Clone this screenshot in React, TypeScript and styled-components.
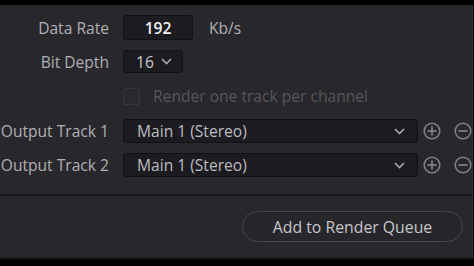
import React from "react";
import styled, { createGlobalStyle } from "styled-components";

const Global = createGlobalStyle`
  html, body { margin: 0; padding: 0; background: #000; }
  body { font-family: "Open Sans", "Noto Sans", sans-serif; }
  * { box-sizing: border-box; }
`;

const Screen = styled.div`
  width: 474px;
  height: 266px;
  background: #000;
  padding-top: 5px;
  overflow: hidden;
`;

const Panel = styled.div`
  width: 473px;
  height: 254px;
  background: #28272c;
  border-right: 1px solid #333238;
  border-bottom: 2px solid #18171b;
  display: flex;
  flex-direction: column;
`;

const Form = styled.div`
  display: grid;
  grid-template-columns: 109px 1fr;
  column-gap: 14px;
  row-gap: 10px;
  padding-top: 10px;
  padding-bottom: 17px;
  border-bottom: 2px solid #1a191d;
  align-items: center;
`;

const Label = styled.div`
  justify-self: end;
  white-space: nowrap;
  font-size: 15.6px;
  color: #b0afb4;
  line-height: 20px;
`;

const Row = styled.div<{ $h: number }>`
  display: flex;
  align-items: center;
  height: ${(p) => p.$h}px;
`;

const Field = styled.div<{ $w: number; $h: number }>`
  width: ${(p) => p.$w}px;
  height: ${(p) => p.$h}px;
  background: #1c1b1f;
  border: 1px solid #121114;
  border-radius: 3px;
  display: flex;
  align-items: center;
  color: #e6e6e8;
  font-size: 15.6px;
`;

const NumberField = styled(Field)`
  justify-content: center;
  font-weight: 600;
  color: #f0f0f2;
`;

const Unit = styled.span`
  margin-left: 16px;
  font-size: 15.6px;
  color: #b0afb4;
`;

const SmallSelect = styled(Field)`
  padding-left: 12px;
  gap: 7px;
  color: #c9c8cc;
`;

const WideSelect = styled(Field)`
  padding-left: 13px;
  padding-right: 12px;
  justify-content: space-between;
  color: #bdbcc0;
`;

const Check = styled.div`
  width: 17px;
  height: 17px;
  border: 1px solid #38373c;
  background: #2a292e;
  border-radius: 2px;
`;

const CheckText = styled.span`
  margin-left: 13px;
  font-size: 15.6px;
  color: #57565b;
`;

const IconBtn = styled.span<{ $ml: number }>`
  margin-left: ${(p) => p.$ml}px;
  display: inline-flex;
`;

const Footer = styled.div`
  flex: 1;
  display: flex;
  justify-content: flex-end;
  align-items: flex-start;
  padding-top: 15px;
  padding-right: 9px;
`;

const QueueButton = styled.button`
  width: 221px;
  height: 31px;
  border-radius: 16px;
  border: 1.5px solid #48474c;
  background: #27262b;
  color: #c8c7cc;
  font-family: "Open Sans", "Noto Sans", sans-serif;
  font-size: 15.8px;
  padding: 0;
`;

const Chevron = ({ w = 11 }: { w?: number }) => (
  <svg width={w} height="7" viewBox="0 0 11 7">
    <path d="M1 1 L5.5 5.5 L10 1" fill="none" stroke="#a8a7ac" strokeWidth="1.6" />
  </svg>
);

const CircleIcon = ({ plus }: { plus?: boolean }) => (
  <svg width="18" height="18" viewBox="0 0 18 18">
    <circle cx="9" cy="9" r="7.8" fill="none" stroke="#808085" strokeWidth="1.6" />
    <path d="M4.5 9 H13.5" stroke="#808085" strokeWidth="1.8" />
    {plus && <path d="M9 4.5 V13.5" stroke="#808085" strokeWidth="1.8" />}
  </svg>
);

const tracks = ["Output Track 1", "Output Track 2"];

export default function App() {
  return (
    <>
      <Global />
      <Screen>
        <Panel>
          <Form>
            <Label>Data Rate</Label>
            <Row $h={25}>
              <NumberField $w={70} $h={25}>192</NumberField>
              <Unit>Kb/s</Unit>
            </Row>
            <Label>Bit Depth</Label>
            <Row $h={23}>
              <SmallSelect $w={60} $h={23}>
                16 <Chevron />
              </SmallSelect>
            </Row>
            <div />
            <Row $h={26}>
              <Check />
              <CheckText>Render one track per channel</CheckText>
            </Row>
            {tracks.map((t) => (
              <React.Fragment key={t}>
                <Label>{t}</Label>
                <Row $h={24}>
                  <WideSelect $w={295} $h={24}>
                    Main 1 (Stereo) <Chevron />
                  </WideSelect>
                  <IconBtn $ml={5}>
                    <CircleIcon plus />
                  </IconBtn>
                  <IconBtn $ml={13}>
                    <CircleIcon />
                  </IconBtn>
                </Row>
              </React.Fragment>
            ))}
          </Form>
          <Footer>
            <QueueButton>Add to Render Queue</QueueButton>
          </Footer>
        </Panel>
      </Screen>
    </>
  );
}
